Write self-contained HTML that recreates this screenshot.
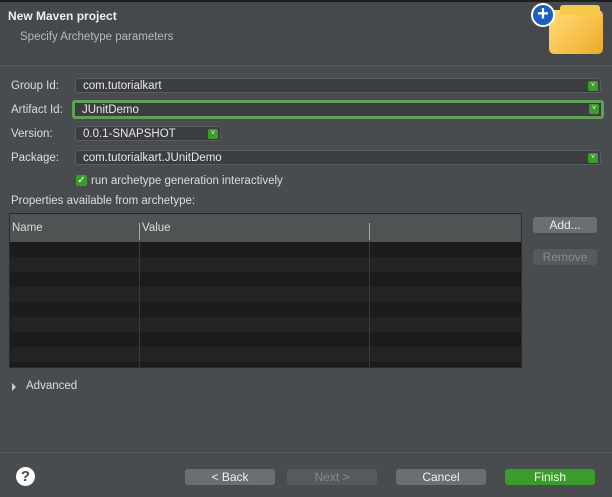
<!DOCTYPE html><html><head><style>
body{margin:0;width:612px;height:497px;background:#494c4f;font-family:"Liberation Sans",sans-serif;font-size:11.5px;color:#dcdcdc;position:relative;overflow:hidden}
.a{position:absolute}
.f{position:absolute;left:75px;height:15px;background:#3b3d40;border:1px solid #5a5d60;border-radius:3px;box-sizing:border-box;padding-left:7px;line-height:15px;color:#e8e8e8}
.dd{position:absolute;right:2px;top:2px;width:10px;height:10px;background:#3f9b2c;border-radius:2px;color:#fff;font-size:7px;line-height:10px;text-align:center}
.lb{position:absolute;left:11px}
.btn{position:absolute;height:16px;border-radius:3px;background:#6c6f72;text-align:center;line-height:16px;color:#eee;font-size:12px}
</style></head><body>
<div class="a" style="left:0;top:0;width:612px;height:2px;background:#1e1e1e"></div>
<div class="a" style="left:0;top:2px;width:612px;height:63px;background:#46494c"></div>
<div class="a" style="left:0;top:65px;width:612px;height:1px;background:#5b5e61"></div>
<div class="a" style="left:8px;top:9px;font-weight:bold;font-size:12px;color:#f0f0f0">New Maven project</div>
<div class="a" style="left:20px;top:31px;color:#b8b8b8">Specify Archetype parameters</div>
<div class="a" style="left:549px;top:10px;width:54px;height:44px;border-radius:5px;background:linear-gradient(135deg,#fde07a,#f0a828)"></div>
<div class="a" style="left:560px;top:5px;width:40px;height:10px;border-radius:3px;background:#f5c94a"></div>
<div class="a" style="left:531px;top:3px;width:24px;height:24px;border-radius:50%;background:#1c5fc0;border:2px solid #fff;box-sizing:border-box;color:#fff;font-weight:bold;font-size:20px;line-height:19px;text-align:center">+</div>
<div class="lb" style="top:80px">Group Id:</div>
<div class="f" style="top:78px;width:526px">com.tutorialkart<div class="dd">˅</div></div>
<div class="lb" style="top:104px">Artifact Id:</div>
<div class="f" style="top:100px;left:72px;width:532px;height:19px;border:3px solid #5f9e55;line-height:14px">JUnitDemo<div class="dd" style="top:1px">˅</div></div>
<div class="lb" style="top:128px">Version:</div>
<div class="f" style="top:126px;width:146px">0.0.1-SNAPSHOT<div class="dd">˅</div></div>
<div class="lb" style="top:152px">Package:</div>
<div class="f" style="top:150px;width:526px">com.tutorialkart.JUnitDemo<div class="dd">˅</div></div>
<div class="a" style="left:76px;top:175px;width:11px;height:11px;background:#3f9b2c;border-radius:2px;color:#fff;font-size:10px;line-height:11px;text-align:center">✓</div>
<div class="a" style="left:91px;top:175px">run archetype generation interactively</div>
<div class="a" style="left:11px;top:195px">Properties available from archetype:</div>
<div class="a" style="left:9px;top:213px;width:513px;height:155px;background:#2a2a2a;border:1px solid #2b2b2b;box-sizing:border-box;overflow:hidden">
<div style="height:28px;background:#4f5354;position:relative"><span class="a" style="left:2px;top:8px">Name</span><span class="a" style="left:132px;top:8px">Value</span>
<div class="a" style="left:129px;top:9px;width:1px;height:17px;background:#aaa"></div><div class="a" style="left:359px;top:9px;width:1px;height:17px;background:#aaa"></div></div>
<div style="height:15px;background:#1c1c1c"></div><div style="height:15px;background:#232323"></div><div style="height:15px;background:#1c1c1c"></div><div style="height:15px;background:#232323"></div><div style="height:15px;background:#1c1c1c"></div><div style="height:15px;background:#232323"></div><div style="height:15px;background:#1c1c1c"></div><div style="height:15px;background:#232323"></div><div style="height:15px;background:#1c1c1c"></div>
<div class="a" style="left:129px;top:28px;width:1px;height:130px;background:#3a3a3a"></div><div class="a" style="left:359px;top:28px;width:1px;height:130px;background:#3a3a3a"></div>
</div>
<div class="btn" style="left:533px;top:217px;width:64px">Add...</div>
<div class="btn" style="left:533px;top:249px;width:64px;background:#575a5d;color:#8a8a8a">Remove</div>
<div class="a" style="left:12px;top:383px;width:0;height:0;border-left:4px solid #ccc;border-top:4px solid transparent;border-bottom:4px solid transparent"></div>
<div class="a" style="left:26px;top:380px">Advanced</div>
<div class="a" style="left:0;top:452px;width:612px;height:1px;background:#5b5e61"></div>
<div class="a" style="left:16px;top:467px;width:19px;height:19px;border-radius:50%;background:#fff;color:#444;font-weight:bold;font-size:15px;line-height:19px;text-align:center">?</div>
<div class="btn" style="left:185px;top:469px;width:90px">&lt; Back</div>
<div class="btn" style="left:287px;top:469px;width:90px;background:#575a5d;color:#8a8a8a">Next &gt;</div>
<div class="btn" style="left:396px;top:469px;width:90px">Cancel</div>
<div class="btn" style="left:505px;top:469px;width:90px;background:#3a9c2a;color:#fff">Finish</div>
</body></html>
